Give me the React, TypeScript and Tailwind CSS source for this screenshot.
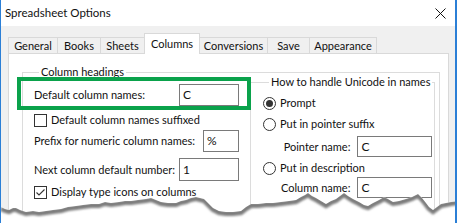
import React from "react";

const tearPts: [number, number][] = [
  [0, 207], [4, 209], [8, 210], [12, 208], [15, 208], [19, 210], [25, 212], [32, 211], [38, 212], [45, 211],
  [52, 210], [60, 209], [67, 207], [75, 206], [82, 205], [90, 204], [98, 204], [104, 202], [110, 203],
  [118, 202], [124, 201], [130, 201], [137, 200], [145, 199], [150, 198], [155, 200], [160, 202],
  [167, 203], [175, 203], [180, 201], [185, 200], [190, 198], [195, 197], [199, 198], [203, 199],
  [207, 203], [212, 208], [218, 211], [225, 212], [232, 212], [240, 211], [245, 207], [250, 204],
  [257, 204], [265, 203], [272, 203], [280, 202], [288, 201], [295, 200], [300, 197], [304, 195],
  [307, 193], [311, 196], [315, 198], [320, 201], [325, 204], [330, 201], [335, 199], [339, 196],
  [343, 193], [347, 196], [352, 199], [358, 202], [363, 205], [367, 206], [372, 203], [378, 200],
  [383, 197], [387, 199], [392, 202], [398, 201], [405, 199], [411, 197], [417, 194], [421, 198],
  [425, 203], [428, 207], [432, 210], [436, 207], [440, 204], [445, 203], [450, 202], [457, 201],
];

function Tear() {
  const line = tearPts.map(([x, y], i) => `${i === 0 ? "M" : "L"}${x} ${y}`).join(" ");
  const fill = `${line} L457 223 L0 223 Z`;
  return (
    <svg className="absolute inset-0 pointer-events-none z-30" width="457" height="223" viewBox="0 0 457 223">
      <defs>
        <filter id="blur" x="-5%" y="-50%" width="110%" height="200%">
          <feGaussianBlur stdDeviation="1.3" />
        </filter>
        <clipPath id="below">
          <path d={fill} />
        </clipPath>
      </defs>
      <path d={fill} fill="#ffffff" />
      <g clipPath="url(#below)">
        <path d={line} transform="translate(0,1.5)" stroke="#7c7c7c" strokeWidth="5" fill="none" filter="url(#blur)" />
      </g>
    </svg>
  );
}

function Checkbox({ checked }: { checked?: boolean }) {
  return (
    <span className="w-[13px] h-[13px] border border-[#333333] bg-white flex items-center justify-center shrink-0">
      {checked && (
        <svg width="11" height="11" viewBox="0 0 11 11">
          <path d="M1.5 5.5 L4 8 L9.5 2.5" stroke="#333333" strokeWidth="1.1" fill="none" />
        </svg>
      )}
    </span>
  );
}

function Radio({ checked }: { checked?: boolean }) {
  return (
    <span className="w-[13px] h-[13px] rounded-full border border-[#333333] bg-white flex items-center justify-center shrink-0">
      {checked && <span className="w-[7px] h-[7px] rounded-full bg-[#333333]" />}
    </span>
  );
}

function Input({ value, w, h = 22 }: { value: string; w: string; h?: number }) {
  return (
    <div
      className={`${w} ${h === 23 ? "h-[23px]" : h === 21 ? "h-[21px]" : "h-[22px]"} border border-[#7a7a7a] bg-white flex items-center pl-[3px] shrink-0 text-[12px]`}
    >
      {value}
    </div>
  );
}

const tabs = [
  { label: "General", w: "w-[50px]" },
  { label: "Books", w: "w-[44px]" },
  { label: "Sheets", w: "w-[45px]" },
  { label: "Columns", w: "w-[56px]", active: true },
  { label: "Conversions", w: "w-[69px]" },
  { label: "Save", w: "w-[43px]" },
  { label: "Appearance", w: "w-[68px]" },
];

export default function App() {
  return (
    <div className="relative w-[457px] h-[223px] overflow-hidden bg-white border-l border-r-2 border-[#2b7fd6] flex flex-col text-[11px] leading-[16px] text-[#111] whitespace-nowrap font-['Lato','Noto_Sans',sans-serif]">
      {/* Title bar */}
      <div className="h-[26px] shrink-0 flex items-center justify-between pl-[4px] pr-[9px]">
        <span className="text-[11.5px]">Spreadsheet Options</span>
        <svg width="11" height="11" viewBox="0 0 11 11">
          <path d="M0.5 0.5 L10.5 10.5 M10.5 0.5 L0.5 10.5" stroke="#111" strokeWidth="1" />
        </svg>
      </div>

      {/* Body */}
      <div className="flex-1 bg-[#f0f0f0] pl-[7px] pr-[6px] pt-[7px] flex flex-col">
        <div className="flex items-end h-[20px] relative z-10">
          {tabs.map((t, i) =>
            t.active ? (
              <div
                key={t.label}
                className={`${t.w} h-[21px] -ml-px -mb-px bg-white border border-b-0 border-[#d9d9d9] flex items-center justify-center pb-[1px]`}
              >
                {t.label}
              </div>
            ) : (
              <div
                key={t.label}
                className={`${t.w} h-[16px] ${i === 0 ? "" : "-ml-px"} bg-[#f0f0f0] border border-b-0 border-[#d9d9d9] flex items-center justify-center`}
              >
                {t.label}
              </div>
            )
          )}
        </div>

        <div className="flex-1 bg-white border border-[#d9d9d9] pl-[13px] pr-[8px] pt-[10px]">
          <fieldset className="border border-[#dcdcdc] h-[200px] pl-[11px]">
            <legend className="ml-[5px] px-[2px] leading-[16px]">Column headings</legend>
            <div className="flex items-start">
              {/* Left column */}
              <div className="w-[205px] flex flex-col">
                <div className="mt-[4px] h-[22px] flex items-center justify-between">
                  <span>Default column names:</span>
                  <Input value="C" w="w-[60px]" />
                </div>
                <div className="mt-[6px] h-[16px] flex items-center gap-[4px]">
                  <Checkbox />
                  <span>Default column names suffixed</span>
                </div>
                <div className="mt-[2px] h-[22px] flex items-center justify-between">
                  <span>Prefix for numeric column names:</span>
                  <Input value="%" w="w-[36px]" />
                </div>
                <div className="mt-[6px] h-[23px] flex items-center justify-between">
                  <span>Next column default number:</span>
                  <Input value="1" w="w-[60px]" h={23} />
                </div>
                <div className="mt-[3px] h-[16px] flex items-center gap-[4px]">
                  <Checkbox checked />
                  <span>Display type icons on columns</span>
                </div>
              </div>

              {/* Right group */}
              <fieldset className="ml-[11px] -mt-[6px] w-[183px] h-[150px] border border-[#dcdcdc] pl-[12px] pr-[2px]">
                <legend className="ml-[6px] px-[2px] leading-[16px]">How to handle Unicode in names</legend>
                <div className="flex flex-col">
                  <div className="mt-[5px] h-[16px] flex items-center gap-[4px]">
                    <Radio checked />
                    <span>Prompt</span>
                  </div>
                  <div className="mt-[5px] h-[16px] flex items-center gap-[4px]">
                    <Radio />
                    <span>Put in pointer suffix</span>
                  </div>
                  <div className="mt-[4px] h-[21px] flex items-center justify-end gap-[7px]">
                    <span>Pointer name:</span>
                    <Input value="C" w="w-[75px]" h={21} />
                  </div>
                  <div className="mt-[3px] h-[16px] flex items-center gap-[4px]">
                    <Radio />
                    <span>Put in description</span>
                  </div>
                  <div className="mt-[1px] h-[21px] flex items-center justify-end gap-[7px]">
                    <span>Column name:</span>
                    <Input value="C" w="w-[75px]" h={21} />
                  </div>
                </div>
              </fieldset>
            </div>
          </fieldset>
        </div>
      </div>

      {/* Green annotation highlight */}
      <div className="absolute left-[16px] top-[77px] w-[234px] h-[33px] border-[4px] border-[#0aa24b] z-20 pointer-events-none" />

      <Tear />
    </div>
  );
}
